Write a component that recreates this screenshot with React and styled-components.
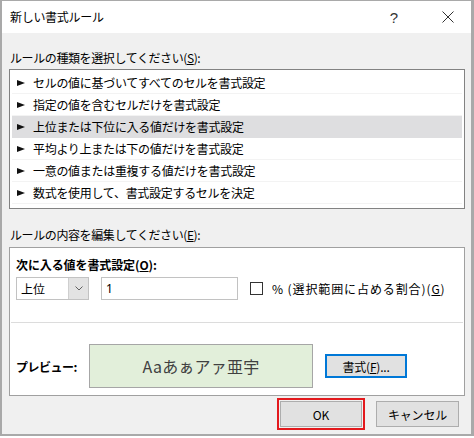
import React from 'react';
import styled, { createGlobalStyle } from 'styled-components';

const GlobalStyle = createGlobalStyle`
  html, body {
    margin: 0;
    padding: 0;
    background: #ffffff;
  }
  body {
    font-family: 'Noto Sans CJK JP', 'Noto Sans', sans-serif;
    font-size: 12px;
    color: #000;
  }
  * {
    box-sizing: border-box;
  }
`;

const Dialog = styled.div`
  width: 474px;
  height: 436px;
  border-style: solid;
  border-color: #a9a9a9;
  border-width: 1px 3px 2px 2px;
  display: flex;
  flex-direction: column;
  background: #f0f0f0;
`;

const TitleBar = styled.div`
  height: 32px;
  background: #fff;
  display: flex;
  align-items: center;
  padding-left: 8px;
`;

const Title = styled.div`
  flex: 1;
  font-size: 12px;
  line-height: 16px;
  letter-spacing: -0.3px;
`;

const CaptionButton = styled.div`
  width: 46px;
  height: 32px;
  display: flex;
  align-items: center;
  justify-content: center;
  font-family: 'Liberation Sans', sans-serif;
  font-size: 15px;
  color: #333;
  margin-left: ${props => props.gap || 0}px;
`;

const Body = styled.div`
  flex: 1;
  padding: 17px 6px 0 7px;
  display: flex;
  flex-direction: column;
`;

const SectionLabel = styled.div`
  line-height: 16px;
  height: 16px;
  letter-spacing: -0.4px;
  margin-top: ${props => props.top || 0}px;
  margin-bottom: ${props => props.bottom || 0}px;
  padding-left: 1px;
`;

const ListBox = styled.div`
  height: 140px;
  background: #fff;
  border: 1px solid #828282;
  padding: 2px 2px 4px;
`;

const Row = styled.div`
  height: 22px;
  display: flex;
  align-items: center;
  padding-left: 5px;
  background: ${props => (props.selected ? '#dedee0' : '#fff')};
  border-bottom: 1px solid ${props => (props.selected ? '#dedee0' : '#f3f3f3')};
  letter-spacing: -0.3px;
`;

const Pointer = styled.svg`
  width: 8px;
  height: 6px;
  margin-right: 8px;
  flex: none;
`;

const Panel = styled.div`
  height: 149px;
  background: #fff;
  border: 1px solid #a0a0a0;
  display: flex;
  flex-direction: column;
`;

const PanelTop = styled.div`
  padding: 9px 6px 0;
`;

const BoldLabel = styled.div`
  font-weight: 700;
  line-height: 16px;
  height: 16px;
  letter-spacing: -0.1px;
`;

const Controls = styled.div`
  display: flex;
  align-items: center;
  height: 23px;
  margin-top: 4px;
`;

const Combo = styled.div`
  width: 73px;
  height: 23px;
  border: 1px solid #c2c2c2;
  display: flex;
  align-items: stretch;
`;

const ComboText = styled.div`
  flex: 1;
  display: flex;
  align-items: center;
  padding-left: 4px;
`;

const ComboArrow = styled.div`
  width: 20px;
  background: #e3e3e3;
  border-left: 1px solid #cfcfcf;
  display: flex;
  align-items: center;
  justify-content: center;
`;

const TextInput = styled.div`
  width: 137px;
  height: 23px;
  border: 1px solid #c2c2c2;
  margin-left: 12px;
  display: flex;
  align-items: center;
  padding-left: 4px;
  font-family: 'Noto Sans', sans-serif;
`;

const CheckBox = styled.div`
  width: 13px;
  height: 13px;
  border: 1px solid #333;
  background: #fff;
  margin-left: 12px;
  margin-right: 9px;
`;

const CheckLabel = styled.div`
  letter-spacing: 0.9px;
`;

const Divider = styled.div`
  height: 1px;
  background: #dcdcdc;
  margin: 22px 1px 0;
`;

const PreviewRow = styled.div`
  display: flex;
  align-items: center;
  height: 44px;
  margin-top: 21px;
  padding-left: 6px;
`;

const PreviewLabel = styled.div`
  width: 73px;
  font-weight: 700;
  letter-spacing: -0.5px;
`;

const PreviewBox = styled.div`
  width: 224px;
  height: 44px;
  background: #e2efda;
  border: 1px solid #a6a6a6;
  display: flex;
  align-items: center;
  justify-content: center;
  font-size: 16px;
  color: #404040;
  letter-spacing: 0.2px;
`;

const Button = styled.div`
  width: ${props => props.w}px;
  height: ${props => props.h || 26}px;
  background: #e1e1e1;
  border: 1px solid ${props => (props.focused ? '#0078d7' : '#adadad')};
  box-shadow: ${props => (props.focused ? 'inset 0 0 0 1px #0078d7' : 'none')};
  display: flex;
  align-items: center;
  justify-content: center;
  margin-left: ${props => props.left || 0}px;
  letter-spacing: -0.2px;
`;

const Footer = styled.div`
  display: flex;
  justify-content: flex-end;
  align-items: center;
  margin-top: 2px;
  padding-right: 6px;
`;

const Highlight = styled.div`
  border: 2px solid #e3191d;
  padding: 1px;
`;

const rules = [
  'セルの値に基づいてすべてのセルを書式設定',
  '指定の値を含むセルだけを書式設定',
  '上位または下位に入る値だけを書式設定',
  '平均より上または下の値だけを書式設定',
  '一意の値または重複する値だけを書式設定',
  '数式を使用して、書式設定するセルを決定',
];

export default function App() {
  return (
    <>
      <GlobalStyle />
      <Dialog>
        <TitleBar>
          <Title>新しい書式ルール</Title>
          <CaptionButton>?</CaptionButton>
          <CaptionButton gap={8}>
            <svg width="12" height="12" viewBox="0 0 12 12">
              <path d="M0.5 0.5 L11.5 11.5 M11.5 0.5 L0.5 11.5" stroke="#333" strokeWidth="1" />
            </svg>
          </CaptionButton>
        </TitleBar>
        <Body>
          <SectionLabel bottom={3}>
            ルールの種類を選択してください(<u>S</u>):
          </SectionLabel>
          <ListBox>
            {rules.map((text, i) => (
              <Row key={text} selected={i === 2}>
                <Pointer viewBox="0 0 8 6">
                  <polygon points="0,0 8,3 0,6" fill="#111" />
                </Pointer>
                {text}
              </Row>
            ))}
          </ListBox>
          <SectionLabel top={18} bottom={4}>
            ルールの内容を編集してください(<u>E</u>):
          </SectionLabel>
          <Panel>
            <PanelTop>
              <BoldLabel>
                次に入る値を書式設定(<u>O</u>):
              </BoldLabel>
              <Controls>
                <Combo>
                  <ComboText>上位</ComboText>
                  <ComboArrow>
                    <svg width="8" height="5" viewBox="0 0 8 5">
                      <path d="M0.5 0.5 L4 4 L7.5 0.5" stroke="#606060" strokeWidth="1" fill="none" />
                    </svg>
                  </ComboArrow>
                </Combo>
                <TextInput>1</TextInput>
                <CheckBox />
                <CheckLabel>
                  % (選択範囲に占める割合)(<u>G</u>)
                </CheckLabel>
              </Controls>
            </PanelTop>
            <Divider />
            <PreviewRow>
              <PreviewLabel>プレビュー:</PreviewLabel>
              <PreviewBox>Aaあぁアァ亜宇</PreviewBox>
              <Button w={82} h={24} left={12} focused>
                書式(<u>F</u>)...
              </Button>
            </PreviewRow>
          </Panel>
          <Footer>
            <Highlight>
              <Button w={82}>OK</Button>
            </Highlight>
            <Button w={83} left={11}>
              キャンセル
            </Button>
          </Footer>
        </Body>
      </Dialog>
    </>
  );
}
